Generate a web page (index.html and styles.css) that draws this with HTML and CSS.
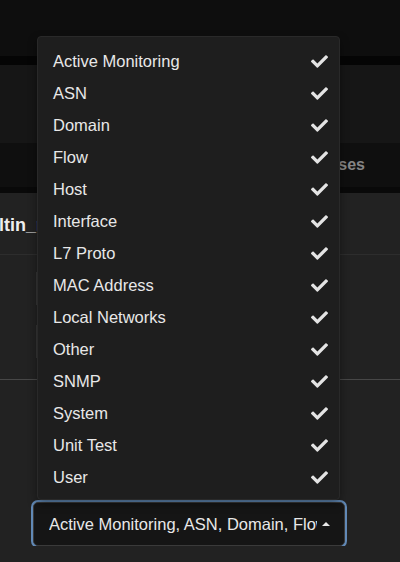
FILE: index.html
```html
<!DOCTYPE html>
<html lang="en">
<head>
  <meta charset="UTF-8">
  <meta name="viewport" content="width=device-width, initial-scale=1.0">
  <title>Edit Recipient</title>
  <link rel="stylesheet" href="styles.css">
</head>
<body>
  <div class="navbar"></div>
  <div class="page-header"></div>
  <div class="tabs">
    <span class="tab">Responses</span>
  </div>

  <div class="modal">
    <div class="modal-header">
      <h4 class="modal-title">builtin_recipient</h4>
    </div>
    <div class="modal-body">
      <div class="field"></div>
      <div class="field"></div>
    </div>

    <div class="select-row">
      <div class="select">
        <ul class="select-menu" id="categoryMenu"></ul>
        <button class="select-toggle" type="button">
          <span class="select-text" id="categoryText"></span>
          <span class="caret"></span>
        </button>
      </div>
    </div>
  </div>

  <script>
    const categories = [
      'Active Monitoring', 'ASN', 'Domain', 'Flow', 'Host', 'Interface',
      'L7 Proto', 'MAC Address', 'Local Networks', 'Other', 'SNMP',
      'System', 'Unit Test', 'User'
    ];

    const check = '<svg class="check" viewBox="0 0 512 512"><path d="M173.9 439.4l-166.4-166.4c-10-10-10-26.2 0-36.2l36.2-36.2c10-10 26.2-10 36.2 0L192 312.7 432.1 72.6c10-10 26.2-10 36.2 0l36.2 36.2c10 10 10 26.2 0 36.2l-294.4 294.4c-10 10-26.2 10-36.2 0z"/></svg>';

    document.getElementById('categoryMenu').innerHTML = categories.map(name => `
      <li class="selected"><span>${name}</span>${check}</li>
    `).join('');

    document.getElementById('categoryText').textContent = categories.join(', ');
  </script>
</body>
</html>
```

FILE: styles.css
```css
body {
  font-family: 'Liberation Sans', Arial, sans-serif;
  margin: 0;
  padding: 0;
  background-color: #222;
  color: #e6e6e6;
  overflow: hidden;
}

.navbar {
  height: 56px;
  background-color: #0e0e0e;
  border-bottom: 9px solid #050505;
}

.page-header {
  height: 78px;
  background-color: #161616;
}

.tabs {
  height: 44px;
  background-color: #0f0f0f;
  border-bottom: 6px solid #090909;
  display: flex;
  justify-content: flex-end;
  align-items: center;
  padding-right: 35px;
}

.tab {
  font-size: 16px;
  font-weight: bold;
  color: #858585;
}

.modal-header {
  height: 62px;
  border-bottom: 1px solid #2d2d2d;
  display: flex;
  align-items: center;
  padding-top: 3px;
  box-sizing: border-box;
  overflow: hidden;
}

.modal-title {
  margin: 0 0 0 -28px;
  font-size: 18px;
  font-weight: bold;
  color: #eee;
  white-space: nowrap;
}

.modal-body {
  padding: 17px 0 21px 36px;
  border-bottom: 1px solid #474747;
  display: grid;
  gap: 20px;
}

.field {
  height: 33px;
  border-left: 1px solid #363636;
}

.select-row {
  padding: 122px 0 0 33px;
}

.select {
  position: relative;
  width: 312px;
}

.select-menu {
  position: absolute;
  left: 4px;
  bottom: 100%;
  width: 303px;
  margin: 0 0 2px;
  padding: 8px 0 6px;
  list-style: none;
  box-sizing: border-box;
  background-color: #1e1e1e;
  border: 1px solid #292929;
  border-radius: 4px;
  box-shadow: 0 4px 10px rgba(0, 0, 0, 0.4);
}

.select-menu li {
  height: 32px;
  padding: 0 11px 0 15px;
  display: flex;
  justify-content: space-between;
  align-items: center;
  font-size: 16.5px;
  color: #e8e8e8;
}

.check {
  width: 17px;
  height: 17px;
  fill: #e4e4e4;
}

.select-toggle {
  width: 100%;
  height: 44px;
  padding: 0 14px 0 15px;
  display: flex;
  align-items: center;
  background-color: #151515;
  border: 1px solid #3a3a3a;
  border-radius: 5px;
  box-shadow: 0 0 0 2px #6189b6;
  font-family: inherit;
  font-size: 16.5px;
  color: #e8e8e8;
  cursor: pointer;
}

.select-text {
  flex: 1;
  overflow: hidden;
  white-space: nowrap;
  text-align: left;
}

.caret {
  margin-left: 5px;
  border-left: 4px solid transparent;
  border-right: 4px solid transparent;
  border-bottom: 4px solid #e8e8e8;
}
```
